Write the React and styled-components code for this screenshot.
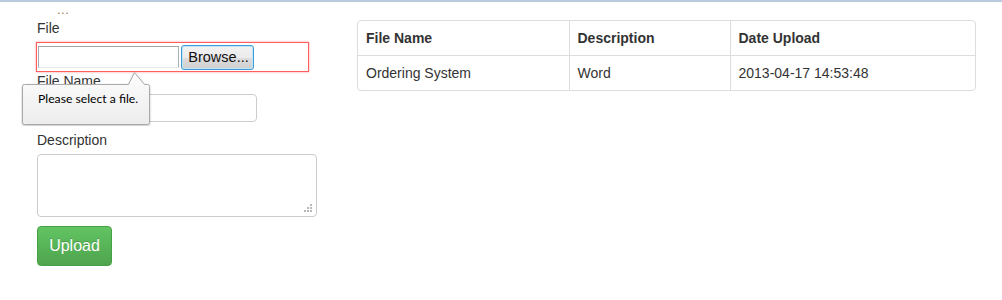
import React from 'react';
import styled, { createGlobalStyle } from 'styled-components';

const GlobalStyle = createGlobalStyle`
  html, body {
    margin: 0;
    padding: 0;
    background: #fff;
  }
  body {
    font-family: 'Liberation Sans', Arial, sans-serif;
    font-size: 14px;
    color: #333;
  }
`;

const Page = styled.div`
  width: 1002px;
  height: 300px;
  border-top: 2px solid #bacbdf;
  box-sizing: border-box;
  display: flex;
  align-items: flex-start;
  padding: 0 0 0 37px;
`;

const FormColumn = styled.div`
  position: relative;
  width: 280px;
  display: flex;
  flex-direction: column;
`;

const Dots = styled.div`
  height: 15px;
  padding-top: 1px;
  margin-left: 20px;
  font-size: 13px;
  line-height: 14px;
  color: #9a7a5a;
  letter-spacing: 0.5px;
`;

const Label = styled.label`
  display: block;
  line-height: 20px;
  height: 20px;
  margin-bottom: ${(p) => p.gap || 4}px;
  margin-top: ${(p) => p.top || 0}px;
  color: #333;
`;

const FileBox = styled.div`
  width: 270px;
  height: 28px;
  margin-left: -1px;
  border: 1px solid #ff5f5f;
  box-shadow: 0 0 2px rgba(255, 80, 80, 0.6);
  display: flex;
  align-items: center;
  gap: 2px;
  padding-left: 1px;
`;

const FilePath = styled.div`
  width: 139px;
  height: 20px;
  border: 1px solid #abadb3;
  border-top-color: #a0a3a8;
  border-bottom-color: #e3e9ef;
  background: #fff;
`;

const BrowseButton = styled.button`
  width: 73px;
  height: 25px;
  border: 1px solid #3c9bd6;
  border-radius: 3px;
  background: linear-gradient(#f2f2f2 0%, #ebebeb 50%, #dddddd 51%, #cfcfcf 100%);
  box-shadow: inset 0 0 0 1px #c4e5f6;
  font-family: 'Liberation Sans', Arial, sans-serif;
  font-size: 14.5px;
  color: #111;
  padding: 0 0 0 2px;
  cursor: pointer;
`;

const TextInput = styled.input`
  width: 220px;
  height: 28px;
  box-sizing: border-box;
  border: 1px solid #ccc;
  border-radius: 4px;
  padding: 4px 8px;
  font-family: inherit;
  font-size: 14px;
  outline: none;
`;

const AreaWrap = styled.div`
  position: relative;
  width: 280px;
  height: 63px;
`;

const TextArea = styled.textarea`
  width: 280px;
  height: 63px;
  box-sizing: border-box;
  border: 1px solid #ccc;
  border-radius: 4px;
  padding: 4px 8px;
  font-family: inherit;
  font-size: 14px;
  display: block;
  outline: none;
  resize: none;
`;

const Grip = styled.svg`
  position: absolute;
  right: 5px;
  bottom: 5px;
  pointer-events: none;
`;

const UploadButton = styled.button`
  width: 75px;
  height: 40px;
  margin-top: 9px;
  border: 1px solid #46a046;
  border-radius: 4px;
  background: linear-gradient(#62c462, #4ea44e);
  color: #fff;
  font-family: 'Liberation Sans', Arial, sans-serif;
  font-size: 16px;
  text-shadow: 0 -1px 0 rgba(0, 0, 0, 0.2);
  cursor: pointer;
  padding: 0;
`;

const Tooltip = styled.div`
  position: absolute;
  left: -16px;
  top: 68px;
  width: 131px;
  height: 56px;
  pointer-events: none;
`;

const TooltipText = styled.div`
  position: absolute;
  left: 17px;
  top: 21px;
  font-family: Lato, 'Open Sans', sans-serif;
  font-size: 12.2px;
  color: #000;
  white-space: nowrap;
`;

const TableWrap = styled.div`
  margin-left: 40px;
  margin-top: 18px;
  width: 619px;
  border: 1px solid #ddd;
  border-radius: 4px;
  overflow: hidden;
  box-sizing: border-box;
`;

const Table = styled.table`
  width: 100%;
  border-collapse: collapse;
  table-layout: fixed;
`;

const Th = styled.th`
  box-sizing: border-box;
  text-align: left;
  font-weight: bold;
  padding: 8px;
  line-height: 18px;
  color: #333;
  border-left: ${(p) => (p.first ? 'none' : '1px solid #ddd')};
  width: ${(p) => (p.w ? `${p.w}px` : 'auto')};
`;

const Td = styled.td`
  padding: 8px;
  line-height: 18px;
  color: #333;
  border-top: 1px solid #ddd;
  border-left: ${(p) => (p.first ? 'none' : '1px solid #ddd')};
`;

const gripDots = [
  [6, 0],
  [3, 3],
  [6, 3],
  [0, 6],
  [3, 6],
  [6, 6],
];

function App() {
  return (
    <>
      <GlobalStyle />
      <Page>
        <FormColumn>
          <Dots>...</Dots>
          <Label>File</Label>
          <FileBox>
            <FilePath />
            <BrowseButton>Browse...</BrowseButton>
          </FileBox>
          <Label top={-1} gap={3}>File Name</Label>
          <TextInput />
          <Label top={8}>Description</Label>
          <AreaWrap>
            <TextArea />
            <Grip width="8" height="8" viewBox="0 0 8 8">
              {gripDots.map(([x, y]) => (
                <rect key={`${x}-${y}`} x={x} y={y} width="2" height="2" fill="#b8b8b8" />
              ))}
            </Grip>
          </AreaWrap>
          <UploadButton>Upload</UploadButton>

          <Tooltip>
            <svg width="131" height="56" viewBox="0 0 131 56">
              <defs>
                <linearGradient id="tipbg" x1="0" y1="0" x2="0" y2="1">
                  <stop offset="0" stopColor="#fdfdfd" />
                  <stop offset="1" stopColor="#ececec" />
                </linearGradient>
                <filter id="tipshadow" x="-10%" y="-10%" width="120%" height="130%">
                  <feDropShadow dx="0" dy="1" stdDeviation="1" floodColor="#000" floodOpacity="0.25" />
                </filter>
              </defs>
              <path
                d="M3.5 14.5 H107.5 L113.5 2.5 L123.5 14.5 H126.5 Q128.5 14.5 128.5 16.5 V52.5 Q128.5 54.5 126.5 54.5 H3.5 Q1.5 54.5 1.5 52.5 V16.5 Q1.5 14.5 3.5 14.5 Z"
                fill="url(#tipbg)"
                stroke="#a9a9a9"
                strokeWidth="1"
                filter="url(#tipshadow)"
              />
            </svg>
            <TooltipText>Please select a file.</TooltipText>
          </Tooltip>
        </FormColumn>

        <TableWrap>
          <Table>
            <thead>
              <tr>
                <Th first w={211}>File Name</Th>
                <Th w={161}>Description</Th>
                <Th>Date Upload</Th>
              </tr>
            </thead>
            <tbody>
              <tr>
                <Td first>Ordering System</Td>
                <Td>Word</Td>
                <Td>2013-04-17 14:53:48</Td>
              </tr>
            </tbody>
          </Table>
        </TableWrap>
      </Page>
    </>
  );
}

export default App;
